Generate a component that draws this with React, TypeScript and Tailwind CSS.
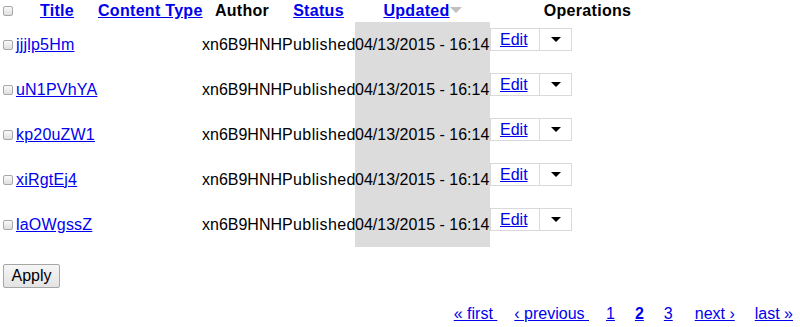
import React from "react";

const rows = ["jjjlp5Hm", "uN1PVhYA", "kp20uZW1", "xiRgtEj4", "laOWgssZ"];

function Box() {
  return (
    <span className="inline-block w-[10px] h-[10px] rounded-[2px] border border-[#a8a8a8] bg-gradient-to-b from-[#fafafa] to-[#dedede] align-middle" />
  );
}

export default function App() {
  return (
    <div className="w-[800px] h-[327px] bg-white text-black text-[16px] leading-[18px] font-['Liberation_Sans',Arial,sans-serif] overflow-hidden">
      <table className="table-fixed w-[685px] border-collapse">
        <thead>
          <tr className="h-[22px] tracking-[0.3px]">
            <th className="w-[16px] p-0 text-left align-middle">
              <span className="ml-[3px] block leading-none -mt-[2px]"><Box /></span>
            </th>
            <th className="w-[82px] p-0 font-bold">
              <a href="#" className="text-[#0000ee] underline">Title</a>
            </th>
            <th className="w-[104px] p-0 font-bold whitespace-nowrap">
              <a href="#" className="text-[#0000ee] underline">Content Type</a>
            </th>
            <th className="w-[80px] p-0 font-bold">Author</th>
            <th className="w-[73px] p-0 font-bold">
              <a href="#" className="text-[#0000ee] underline">Status</a>
            </th>
            <th className="w-[135px] p-0 font-bold whitespace-nowrap">
              <a href="#" className="text-[#0000ee] underline">Updated</a>
              <span className="inline-block align-middle ml-0 w-0 h-0 border-l-[6px] border-r-[6px] border-t-[6px] border-l-transparent border-r-transparent border-t-[#c0c0c0] -mt-[3px]" />
            </th>
            <th className="w-[195px] p-0 font-bold">Operations</th>
          </tr>
        </thead>
        <tbody>
          {rows.map((t) => (
            <tr key={t} className="h-[45px]">
              <td className="p-0 align-middle">
                <span className="ml-[3px] block leading-none"><Box /></span>
              </td>
              <td className="p-0 whitespace-nowrap">
                <a href="#" className="text-[#0000ee] underline tracking-[0.2px]">{t}</a>
              </td>
              <td className="p-0"></td>
              <td className="p-0 whitespace-nowrap">xn6B9HNH</td>
              <td className="p-0 whitespace-nowrap tracking-[0.4px]">Published</td>
              <td className="p-0 whitespace-nowrap bg-[#dcdcdc]">04/13/2015 - 16:14</td>
              <td className="p-0 align-top pt-[6px]">
                <div className="inline-flex h-[23px] border border-[#d9d9d9] bg-white">
                  <a href="#" className="w-[49px] pl-[9px] text-[#0000ee] underline leading-[21px] border-r border-[#d9d9d9]">Edit</a>
                  <span className="w-[31px] flex items-center justify-center">
                    <span className="w-0 h-0 border-l-[5px] border-r-[5px] border-t-[5px] border-l-transparent border-r-transparent border-t-black -mt-[1px]" />
                  </span>
                </div>
              </td>
            </tr>
          ))}
        </tbody>
      </table>
      <div className="pt-[17px] pl-[3px]">
        <button className="h-[24px] w-[57px] border border-[#a6a6a6] rounded-[2px] bg-gradient-to-b from-[#f6f6f6] to-[#e3e3e3] text-[16px] leading-[20px] text-black">Apply</button>
      </div>
      <div className="flex justify-end pr-[7px] mt-[17px] whitespace-pre">
        <a href="#" className="text-[#0000ee] underline">« first </a>
        <a href="#" className="ml-[17px] text-[#0000ee] underline">‹ previous </a>
        <a href="#" className="ml-[17px] text-[#0000ee] underline">1</a>
        <a href="#" className="ml-[20px] text-[#0000ee] underline font-bold">2</a>
        <a href="#" className="ml-[20px] text-[#0000ee] underline">3</a>
        <a href="#" className="ml-[22px] text-[#0000ee] underline">next ›</a>
        <a href="#" className="ml-[20px] text-[#0000ee] underline">last »</a>
      </div>
    </div>
  );
}
